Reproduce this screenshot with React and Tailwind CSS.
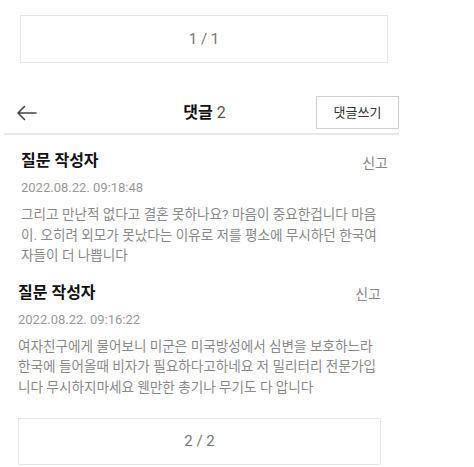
import React from 'react';

const comments = [
  {
    name: '질문 작성자',
    date: '2022.08.22. 09:18:48',
    lines: [
      '그리고 만난적 없다고 결혼 못하나요? 마음이 중요한겁니다 마음',
      '이. 오히려 외모가 못났다는 이유로 저를 평소에 무시하던 한국여',
      '자들이 더 나쁩니다',
    ],
    pad: 'pl-[21px] w-[388px]',
  },
  {
    name: '질문 작성자',
    date: '2022.08.22. 09:16:22',
    lines: [
      '여자친구에게 물어보니 미군은 미국방성에서 심변을 보호하느라',
      '한국에 들어올때 비자가 필요하다고하네요 저 밀리터리 전문가입',
      '니다 무시하지마세요 웬만한 총기나 무기도 다 압니다',
    ],
    pad: 'pl-[18px] w-[381px]',
  },
];

function Pager({ text, className }) {
  return (
    <div className={`flex items-center justify-center border border-[#e6e6e6] text-[15px] text-[#777] ${className}`}>
      {text}
    </div>
  );
}

function App() {
  return (
    <div className="w-[474px] h-[467px] bg-white overflow-hidden" style={{ fontFamily: 'Roboto, "Noto Sans CJK KR", sans-serif' }}>
      <Pager text="1 / 1" className="ml-[20px] mt-[15px] w-[368px] h-[48px]" />

      {/* header */}
      <div className="mt-[33px] ml-[4px] w-[395px] border-b-2 border-[#e8e8e8] pb-[4px]">
        <div className="flex items-center h-[33px]">
          <div className="w-[120px] pl-[12px]">
            <svg width="22" height="16" viewBox="0 0 22 16" fill="none" stroke="#444" strokeWidth="1.6" strokeLinecap="round" strokeLinejoin="round">
              <path d="M20 8H2M8.5 1.5L2 8l6.5 6.5" />
            </svg>
          </div>
          <div className="flex-1 flex justify-center items-baseline text-[16px] pl-[6px]">
            <span className="font-bold text-[#111]">댓글</span>
            <span className="ml-[4px] text-[#555]">2</span>
          </div>
          <div className="w-[120px] flex justify-end">
            <button className="w-[83px] h-[33px] border border-[#cfcfcf] text-[13px] text-[#333]">댓글쓰기</button>
          </div>
        </div>
      </div>

      {comments.map((c, i) => (
        <div key={i} className={`${c.pad} ${i === 0 ? 'mt-[14px]' : 'mt-[15px]'}`}>
          <div className="flex items-center justify-between h-[24px]">
            <span className="font-bold text-[16px] text-[#111]">{c.name}</span>
            <span className="text-[14px] text-[#888] pt-[4px]">신고</span>
          </div>
          <div className="mt-[5px] text-[13px] text-[#999] leading-[20px]">{c.date}</div>
          <div className="mt-[6px] text-[13.6px] text-[#8a8a8a] leading-[20.6px]">
            {c.lines.map((l, j) => (
              <div key={j} className="whitespace-nowrap">{l}</div>
            ))}
          </div>
        </div>
      ))}

      <Pager text="2 / 2" className="ml-[18px] mt-[20px] w-[363px] h-[47px]" />
    </div>
  );
}

export default App;
